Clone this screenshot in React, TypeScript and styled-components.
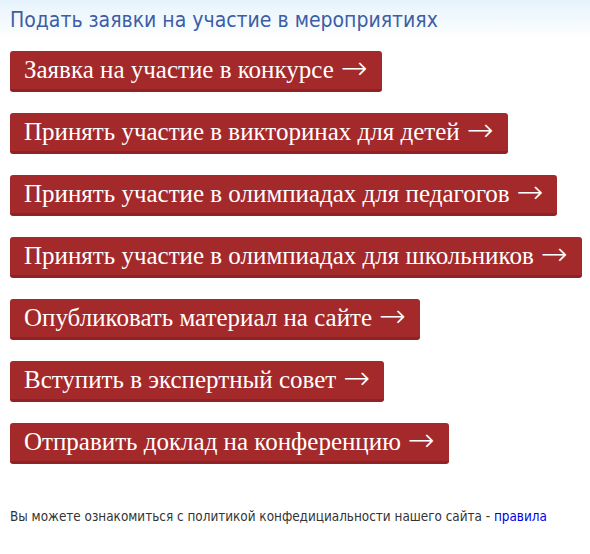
import React from "react";
import styled, { createGlobalStyle } from "styled-components";

const GlobalStyle = createGlobalStyle`
  html, body { margin: 0; padding: 0; background: #ffffff; }
  body { font-family: "DejaVu Sans", Verdana, sans-serif; }
`;

const Page = styled.div`
  width: 590px;
  height: 554px;
  box-sizing: border-box;
  background: linear-gradient(to bottom, #e6f3fc 0px, #ffffff 40px);
  padding: 8px 10px 0 10px;
  display: flex;
  flex-direction: column;
`;

const Title = styled.h2`
  margin: 0 0 19px 0;
  font-family: "DejaVu Sans Condensed", "DejaVu Sans", Verdana, sans-serif;
  font-weight: normal;
  font-size: 21px;
  line-height: 24px;
  color: #3d5da6;
`;

const ButtonList = styled.div`
  display: flex;
  flex-direction: column;
  align-items: flex-start;
  gap: 21px;
`;

const RedButton = styled.a`
  display: inline-flex;
  align-items: center;
  box-sizing: border-box;
  height: 41px;
  padding: 0 14px 2px 14px;
  background: #a4292b;
  border-bottom: 3px solid #8e2224;
  border-radius: 3px;
  color: #ffffff;
  text-decoration: none;
  font-family: "Liberation Serif", "Times New Roman", serif;
  font-size: 25px;
  line-height: 1;
  white-space: nowrap;
  cursor: pointer;
`;

const Arrow = styled.span`
  font-family: "DejaVu Sans", sans-serif;
  font-weight: 200;
  font-size: 32px;
  line-height: 25px;
  margin-left: 7px;
  position: relative;
  top: -1px;
`;

const Footer = styled.p`
  margin: 45px 0 0 0;
  font-family: "DejaVu Sans Condensed", "DejaVu Sans", Tahoma, sans-serif;
  font-size: 13.4px;
  line-height: 16px;
  color: #333333;
  white-space: nowrap;
`;

const Link = styled.a`
  color: #0000ee;
  text-decoration: none;
`;

const items = [
  "Заявка на участие в конкурсе",
  "Принять участие в викторинах для детей",
  "Принять участие в олимпиадах для педагогов",
  "Принять участие в олимпиадах для школьников",
  "Опубликовать материал на сайте",
  "Вступить в экспертный совет",
  "Отправить доклад на конференцию",
];

export default function App() {
  return (
    <>
      <GlobalStyle />
      <Page>
        <Title>Подать заявки на участие в мероприятиях</Title>
        <ButtonList>
          {items.map((t) => (
            <RedButton key={t}>
              {t}
              <Arrow>→</Arrow>
            </RedButton>
          ))}
        </ButtonList>
        <Footer>
          Вы можете ознакомиться с политикой конфедициальности нашего сайта - <Link>правила</Link>
        </Footer>
      </Page>
    </>
  );
}
